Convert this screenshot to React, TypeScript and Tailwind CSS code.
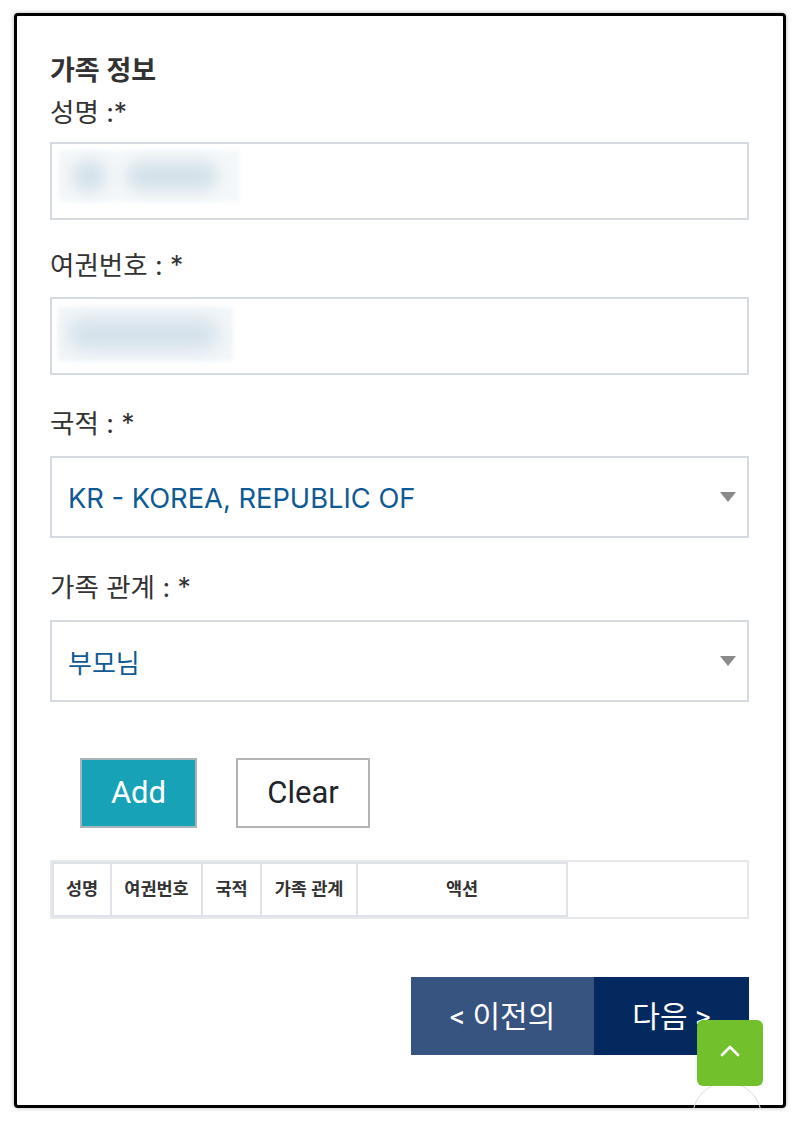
import { ChevronUp } from "lucide-react";

const font = "font-['Roboto','Noto_Sans_CJK_KR',sans-serif]";

function Label({ children, className }: { children: React.ReactNode; className: string }) {
  return (
    <p className={`font-['Inter','Noto_Sans_CJK_KR',sans-serif] text-[26.5px] leading-[36px] text-[#333] ${className}`}>
      {children}
    </p>
  );
}

function BlurInput({ blobs }: { blobs: React.ReactNode }) {
  return (
    <div className="relative h-[78px] overflow-hidden border-2 border-[#d5d9e0] bg-white">
      {blobs}
    </div>
  );
}

function SelectBox({ value, size }: { value: string; size: string }) {
  return (
    <div className="flex h-[82px] items-center justify-between border-2 border-[#d5d9e0] bg-white pl-[16px] pr-[11px]">
      <span className={`mt-[4px] font-['Inter','Noto_Sans_CJK_KR',sans-serif] ${size} text-[#0f5a94]`}>{value}</span>
      <span className="h-0 w-0 border-x-[8px] border-t-[10px] border-x-transparent border-t-[#8a8a8a]" />
    </div>
  );
}

const columns = [
  { name: "성명", w: "w-[58px]" },
  { name: "여권번호", w: "w-[91px]" },
  { name: "국적", w: "w-[59px]" },
  { name: "가족 관계", w: "w-[96px]" },
  { name: "액션", w: "w-[208px]" },
];

export default function App() {
  return (
    <div className={`h-[1121px] w-[800px] bg-white px-[14px] pt-[13px] ${font}`}>
      <div className="relative h-[1095px] rounded-[4px] border-[3px] border-black bg-white pl-[33px] pr-[34px] pt-[37px] shadow-[0_0_4px_rgba(0,0,0,0.3)]">
        <h2 className="text-[27px] font-bold leading-[36px] text-[#333]">가족 정보</h2>
        <Label className="mb-[12px] mt-[5px]">성명 :*</Label>
        <BlurInput
          blobs={
            <div className="absolute left-[6px] top-[6px] flex h-[52px] w-[182px] items-center gap-[20px] bg-[#f5f8fa] pl-[14px] blur-[2px]">
              <div className="h-[32px] w-[34px] rounded-full bg-[#d3e0e9] blur-[8px]" />
              <div className="h-[28px] w-[92px] rounded-full bg-[#d3e0e9] blur-[8px]" />
            </div>
          }
        />
        <Label className="mb-[14px] mt-[27px]">여권번호 : *</Label>
        <BlurInput
          blobs={
            <div className="absolute left-[6px] top-[8px] flex h-[54px] w-[175px] items-center bg-[#f2f6f9] pl-[10px] blur-[2px]">
              <div className="h-[30px] w-[150px] rounded-full bg-[#d3e0e9] blur-[9px]" />
            </div>
          }
        />
        <Label className="mb-[15px] mt-[30px]">국적 : *</Label>
        <SelectBox value="KR - KOREA, REPUBLIC OF" size="text-[27.3px]" />
        <Label className="mb-[15px] mt-[31px]">가족 관계 : *</Label>
        <SelectBox value="부모님" size="text-[26px]" />

        <div className="mt-[56px] flex gap-[39px] pl-[30px]">
          <button className="h-[70px] w-[117px] border-2 border-[#a9b4ba] bg-[#17a2b8] text-[31px] text-white">
            Add
          </button>
          <button className="h-[70px] w-[134px] border-2 border-[#b3b3b3] bg-white text-[31px] text-[#212529]">
            Clear
          </button>
        </div>

        <div className="mt-[32px] h-[59px] border-2 border-[#e6e8ec]">
          <table className="h-[55px] w-[516px] table-fixed border-separate border-spacing-0 border-2 border-[#dfe2e8] bg-white">
            <thead>
              <tr>
                {columns.map((c) => (
                  <th
                    key={c.name}
                    className={`${c.w} border-r-2 border-[#dfe2e8] text-center text-[17.5px] font-bold text-[#333] last:border-r-0`}
                  >
                    {c.name}
                  </th>
                ))}
              </tr>
            </thead>
          </table>
        </div>

        <div className="mt-[58px] flex justify-end">
          <button className="h-[78px] w-[183px] bg-[#37537f] text-[30px] text-white">&lt; 이전의</button>
          <button className="h-[78px] w-[155px] bg-[#03295f] text-[30px] text-white">다음 &gt;</button>
        </div>

        <div className="absolute bottom-[-3px] left-[675px] h-[26px] w-[70px] overflow-hidden">
          <div className="h-[70px] w-[70px] rounded-full border border-[#dcdcdc]" />
        </div>
        <div className="absolute left-[680px] top-[1004px] flex h-[66px] w-[66px] items-center justify-center rounded-[6px] bg-[#72c02c] text-white">
          <ChevronUp size={32} strokeWidth={2} className="mb-[4px]" />
        </div>
      </div>
    </div>
  );
}
